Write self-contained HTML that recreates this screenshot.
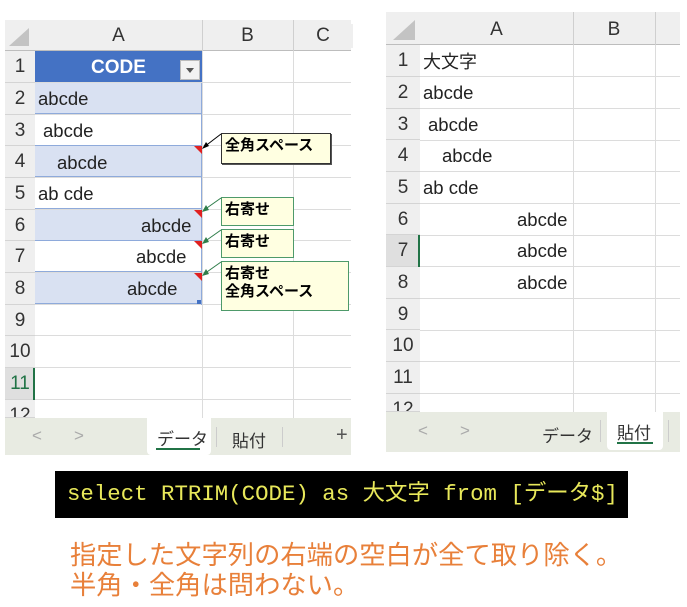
<!DOCTYPE html>
<html><head><meta charset="utf-8"><style>
*{margin:0;padding:0;box-sizing:border-box}
body{width:687px;height:607px;background:#fff;position:relative;overflow:hidden;font-family:"Liberation Sans","Noto Sans CJK JP",sans-serif}
.a{position:absolute}
.hd{background:#efefef;color:#333;font-size:19px;text-align:center}
.rn{background:#efefef;color:#333;font-size:19px;text-align:center;border-bottom:1px solid #d4d4d4}
.hl{background:#dfdfdf}
.vl{background:#dcdcdc;width:1px}
.t{font-size:18.5px;color:#222;white-space:pre}
.cm{background:#ffffe1;font-size:15px;font-weight:bold;color:#000;padding:2px 3px;line-height:18px;font-family:"Noto Sans CJK JP",sans-serif}
.tri{width:0;height:0;border-top:8px solid #e02020;border-left:8px solid transparent}
</style></head><body>

<!-- LEFT SHEET -->
<div class="a" style="left:5px;top:20px;width:346px;height:398px;background:#fff"></div>
<div class="a hd" style="left:5px;top:20px;width:346px;height:31px;border-bottom:1px solid #bdbdbd"></div>
<div class="a" style="left:9px;top:28px;width:0;height:0;border-bottom:18px solid #c3c3c3;border-left:20px solid transparent"></div>
<div class="a hd" style="left:35px;top:24px;width:167px;line-height:24px">A</div>
<div class="a hd" style="left:202px;top:24px;width:91px;line-height:24px">B</div>
<div class="a hd" style="left:293px;top:24px;width:60px;line-height:24px">C</div>
<div class="a" style="left:202px;top:20px;width:1px;height:31px;background:#cfcfcf"></div>
<div class="a" style="left:293px;top:20px;width:1px;height:31px;background:#cfcfcf"></div>
<div class="a" style="left:5px;top:51px;width:30px;height:367px;background:#efefef;border-right:1px solid #bdbdbd"></div>
<div class="a vl" style="left:293px;top:51px;height:367px"></div>
<div class="a vl" style="left:202px;top:51px;height:367px"></div>
<div class="a" style="left:35px;top:82px;width:316px;height:1px;background:#dcdcdc"></div>
<div class="a" style="left:35px;top:114px;width:316px;height:1px;background:#dcdcdc"></div>
<div class="a" style="left:35px;top:145px;width:316px;height:1px;background:#dcdcdc"></div>
<div class="a" style="left:35px;top:177px;width:316px;height:1px;background:#dcdcdc"></div>
<div class="a" style="left:35px;top:209px;width:316px;height:1px;background:#dcdcdc"></div>
<div class="a" style="left:35px;top:240px;width:316px;height:1px;background:#dcdcdc"></div>
<div class="a" style="left:35px;top:272px;width:316px;height:1px;background:#dcdcdc"></div>
<div class="a" style="left:35px;top:304px;width:316px;height:1px;background:#dcdcdc"></div>
<div class="a" style="left:35px;top:335px;width:316px;height:1px;background:#dcdcdc"></div>
<div class="a" style="left:35px;top:367px;width:316px;height:1px;background:#dcdcdc"></div>
<div class="a" style="left:35px;top:399px;width:316px;height:1px;background:#dcdcdc"></div>
<div class="a" style="left:35px;top:51px;width:167px;height:31px;background:#4472c4;color:#fff;font-weight:bold;font-size:19px;text-align:center;line-height:33px">CODE</div>
<div class="a" style="left:180px;top:60px;width:20px;height:20px;background:#f2f2f2;border:1px solid #bbb"></div>
<div class="a" style="left:186px;top:68px;width:0;height:0;border-top:5px solid #555;border-left:4px solid transparent;border-right:4px solid transparent"></div>
<div class="a" style="left:35px;top:83px;width:167px;height:222px;border-right:1px solid #8eaadb"></div>
<div class="a" style="left:35px;top:83px;width:166px;height:31px;background:#d9e1f2;border-bottom:1px solid #8eaadb"></div>
<div class="a" style="left:35px;top:115px;width:166px;height:31px;background:#fff;border-bottom:1px solid #8eaadb"></div>
<div class="a" style="left:35px;top:146px;width:166px;height:31px;background:#d9e1f2;border-bottom:1px solid #8eaadb"></div>
<div class="a" style="left:35px;top:178px;width:166px;height:31px;background:#fff;border-bottom:1px solid #8eaadb"></div>
<div class="a" style="left:35px;top:210px;width:166px;height:31px;background:#d9e1f2;border-bottom:1px solid #8eaadb"></div>
<div class="a" style="left:35px;top:241px;width:166px;height:31px;background:#fff;border-bottom:1px solid #8eaadb"></div>
<div class="a" style="left:35px;top:273px;width:166px;height:31px;background:#d9e1f2;border-bottom:1px solid #8eaadb"></div>
<div class="a" style="left:197px;top:300px;width:4px;height:4px;background:#4472c4"></div>
<div class="a t" style="left:38px;top:88px">abcde</div>
<div class="a t" style="left:43px;top:120px">abcde</div>
<div class="a t" style="left:57px;top:152px">abcde</div>
<div class="a t" style="left:38px;top:183px">ab cde</div>
<div class="a t" style="left:141px;top:215px">abcde</div>
<div class="a t" style="left:136px;top:246px">abcde</div>
<div class="a t" style="left:127px;top:278px">abcde</div>
<div class="a tri" style="left:194px;top:146px"></div>
<div class="a tri" style="left:194px;top:210px"></div>
<div class="a tri" style="left:194px;top:241px"></div>
<div class="a tri" style="left:194px;top:273px"></div>
<div class="a rn" style="left:5px;top:51px;width:30px;height:32px;line-height:32px">1</div>
<div class="a rn" style="left:5px;top:83px;width:30px;height:32px;line-height:32px">2</div>
<div class="a rn" style="left:5px;top:115px;width:30px;height:31px;line-height:31px">3</div>
<div class="a rn" style="left:5px;top:146px;width:30px;height:32px;line-height:32px">4</div>
<div class="a rn" style="left:5px;top:178px;width:30px;height:32px;line-height:32px">5</div>
<div class="a rn" style="left:5px;top:210px;width:30px;height:31px;line-height:31px">6</div>
<div class="a rn" style="left:5px;top:241px;width:30px;height:32px;line-height:32px">7</div>
<div class="a rn" style="left:5px;top:273px;width:30px;height:32px;line-height:32px">8</div>
<div class="a rn" style="left:5px;top:305px;width:30px;height:31px;line-height:31px">9</div>
<div class="a rn" style="left:5px;top:336px;width:30px;height:32px;line-height:32px">10</div>
<div class="a rn hl" style="left:5px;top:368px;width:30px;height:32px;line-height:32px;color:#217346">11</div>
<div class="a" style="left:33px;top:368px;width:2px;height:32px;background:#217346"></div>
<div class="a rn" style="left:5px;top:400px;width:30px;height:18px;line-height:32px;overflow:hidden">12</div>
<svg class="a" style="left:195px;top:130px" width="40" height="190">
<line x1="26" y1="4" x2="9" y2="17" stroke="#000" stroke-width="1"/><polygon points="7,19 14,16 11,12" fill="#000"/>
<line x1="26" y1="68" x2="9" y2="80" stroke="#2e7d4a"/><polygon points="7,82 14,80 11,75" fill="#2e7d4a"/>
<line x1="26" y1="100" x2="9" y2="112" stroke="#2e7d4a"/><polygon points="7,114 14,112 11,107" fill="#2e7d4a"/>
<line x1="26" y1="132" x2="9" y2="144" stroke="#2e7d4a"/><polygon points="7,146 14,144 11,139" fill="#2e7d4a"/>
</svg>
<div class="a cm" style="left:221px;top:133px;width:110px;height:31px;border:1px solid #333;box-shadow:1px 1px 0 #555">全角スペース</div>
<div class="a cm" style="left:221px;top:197px;width:73px;height:29px;border:1px solid #4e9a6a">右寄せ</div>
<div class="a cm" style="left:221px;top:229px;width:73px;height:29px;border:1px solid #4e9a6a">右寄せ</div>
<div class="a cm" style="left:221px;top:261px;width:128px;height:50px;border:1px solid #4e9a6a">右寄せ<br>全角スペース</div>
<div class="a" style="left:5px;top:418px;width:346px;height:37px;background:#e8ebe2"></div>
<div class="a" style="left:32px;top:426px;font-size:17px;color:#aaa">&lt;</div>
<div class="a" style="left:74px;top:426px;font-size:17px;color:#aaa">&gt;</div>
<div class="a" style="left:147px;top:418px;width:64px;height:37px;background:#fff;border-radius:0 0 4px 4px"></div>
<div class="a" style="left:157px;top:425px;font-size:17px;color:#333">データ</div>
<div class="a" style="left:156px;top:448px;width:44px;height:2px;background:#217346"></div>
<div class="a" style="left:216px;top:427px;width:1px;height:20px;background:#ccc"></div>
<div class="a" style="left:232px;top:427px;font-size:17px;color:#333">貼付</div>
<div class="a" style="left:282px;top:427px;width:1px;height:20px;background:#ccc"></div>
<div class="a" style="left:336px;top:424px;font-size:20px;color:#555">+</div>

<!-- RIGHT SHEET -->
<div class="a hd" style="left:386px;top:12px;width:294px;height:33px;border-bottom:1px solid #bdbdbd"></div>
<div class="a" style="left:393px;top:20px;width:0;height:0;border-bottom:20px solid #c3c3c3;border-left:22px solid transparent"></div>
<div class="a hd" style="left:420px;top:18px;width:153px;line-height:24px">A</div>
<div class="a hd" style="left:573px;top:18px;width:82px;line-height:24px">B</div>
<div class="a" style="left:573px;top:12px;width:1px;height:33px;background:#cfcfcf"></div>
<div class="a" style="left:655px;top:12px;width:1px;height:33px;background:#cfcfcf"></div>
<div class="a" style="left:386px;top:45px;width:34px;height:367px;background:#efefef;border-right:1px solid #bdbdbd"></div>
<div class="a vl" style="left:573px;top:45px;height:367px"></div>
<div class="a vl" style="left:655px;top:45px;height:367px"></div>
<div class="a" style="left:420px;top:76px;width:260px;height:1px;background:#dcdcdc"></div>
<div class="a" style="left:420px;top:108px;width:260px;height:1px;background:#dcdcdc"></div>
<div class="a" style="left:420px;top:140px;width:260px;height:1px;background:#dcdcdc"></div>
<div class="a" style="left:420px;top:171px;width:260px;height:1px;background:#dcdcdc"></div>
<div class="a" style="left:420px;top:203px;width:260px;height:1px;background:#dcdcdc"></div>
<div class="a" style="left:420px;top:235px;width:260px;height:1px;background:#dcdcdc"></div>
<div class="a" style="left:420px;top:266px;width:260px;height:1px;background:#dcdcdc"></div>
<div class="a" style="left:420px;top:298px;width:260px;height:1px;background:#dcdcdc"></div>
<div class="a" style="left:420px;top:330px;width:260px;height:1px;background:#dcdcdc"></div>
<div class="a" style="left:420px;top:361px;width:260px;height:1px;background:#dcdcdc"></div>
<div class="a" style="left:420px;top:393px;width:260px;height:1px;background:#dcdcdc"></div>
<div class="a t" style="left:423px;top:48px;font-family:'Noto Sans CJK JP',sans-serif;font-size:18px">大文字</div>
<div class="a t" style="left:423px;top:82px">abcde</div>
<div class="a t" style="left:428px;top:114px">abcde</div>
<div class="a t" style="left:442px;top:145px">abcde</div>
<div class="a t" style="left:423px;top:177px">ab cde</div>
<div class="a t" style="left:517px;top:209px">abcde</div>
<div class="a t" style="left:517px;top:240px">abcde</div>
<div class="a t" style="left:517px;top:272px">abcde</div>
<div class="a rn" style="left:386px;top:45px;width:34px;height:32px;line-height:32px">1</div>
<div class="a rn" style="left:386px;top:77px;width:34px;height:32px;line-height:32px">2</div>
<div class="a rn" style="left:386px;top:109px;width:34px;height:31px;line-height:31px">3</div>
<div class="a rn" style="left:386px;top:140px;width:34px;height:32px;line-height:32px">4</div>
<div class="a rn" style="left:386px;top:172px;width:34px;height:32px;line-height:32px">5</div>
<div class="a rn" style="left:386px;top:204px;width:34px;height:31px;line-height:31px">6</div>
<div class="a rn hl" style="left:386px;top:235px;width:34px;height:32px;line-height:32px">7</div>
<div class="a" style="left:418px;top:235px;width:2px;height:32px;background:#217346"></div>
<div class="a rn" style="left:386px;top:267px;width:34px;height:32px;line-height:32px">8</div>
<div class="a rn" style="left:386px;top:299px;width:34px;height:31px;line-height:31px">9</div>
<div class="a rn" style="left:386px;top:330px;width:34px;height:32px;line-height:32px">10</div>
<div class="a rn" style="left:386px;top:362px;width:34px;height:32px;line-height:32px">11</div>
<div class="a rn" style="left:386px;top:394px;width:34px;height:18px;line-height:32px;overflow:hidden">12</div>
<div class="a" style="left:386px;top:412px;width:294px;height:40px;background:#e8ebe2"></div>
<div class="a" style="left:418px;top:421px;font-size:17px;color:#aaa">&lt;</div>
<div class="a" style="left:460px;top:421px;font-size:17px;color:#aaa">&gt;</div>
<div class="a" style="left:542px;top:422px;font-size:17px;color:#333">データ</div>
<div class="a" style="left:600px;top:420px;width:1px;height:22px;background:#ccc"></div>
<div class="a" style="left:607px;top:412px;width:56px;height:38px;background:#fff;border-radius:0 0 4px 4px"></div>
<div class="a" style="left:617px;top:419px;font-size:17px;color:#333">貼付</div>
<div class="a" style="left:617px;top:442px;width:36px;height:2px;background:#217346"></div>
<div class="a" style="left:668px;top:420px;width:1px;height:22px;background:#ccc"></div>

<!-- code -->
<div class="a" style="left:55px;top:471px;width:573px;height:47px;background:#000"></div>
<div class="a" style="left:67px;top:480px;font-family:'Liberation Mono','Noto Sans CJK JP',monospace;font-size:22.4px;color:#e8e85a;white-space:pre;line-height:28px">select RTRIM(CODE) as 大文字 from [データ$]</div>
<div class="a" style="left:70px;top:538px;font-family:'Noto Sans CJK JP',sans-serif;font-size:26.3px;color:#e8803a;line-height:30px;white-space:nowrap">指定した文字列の右端の空白が全て取り除く。<br>半角・全角は問わない。</div>
</body></html>
